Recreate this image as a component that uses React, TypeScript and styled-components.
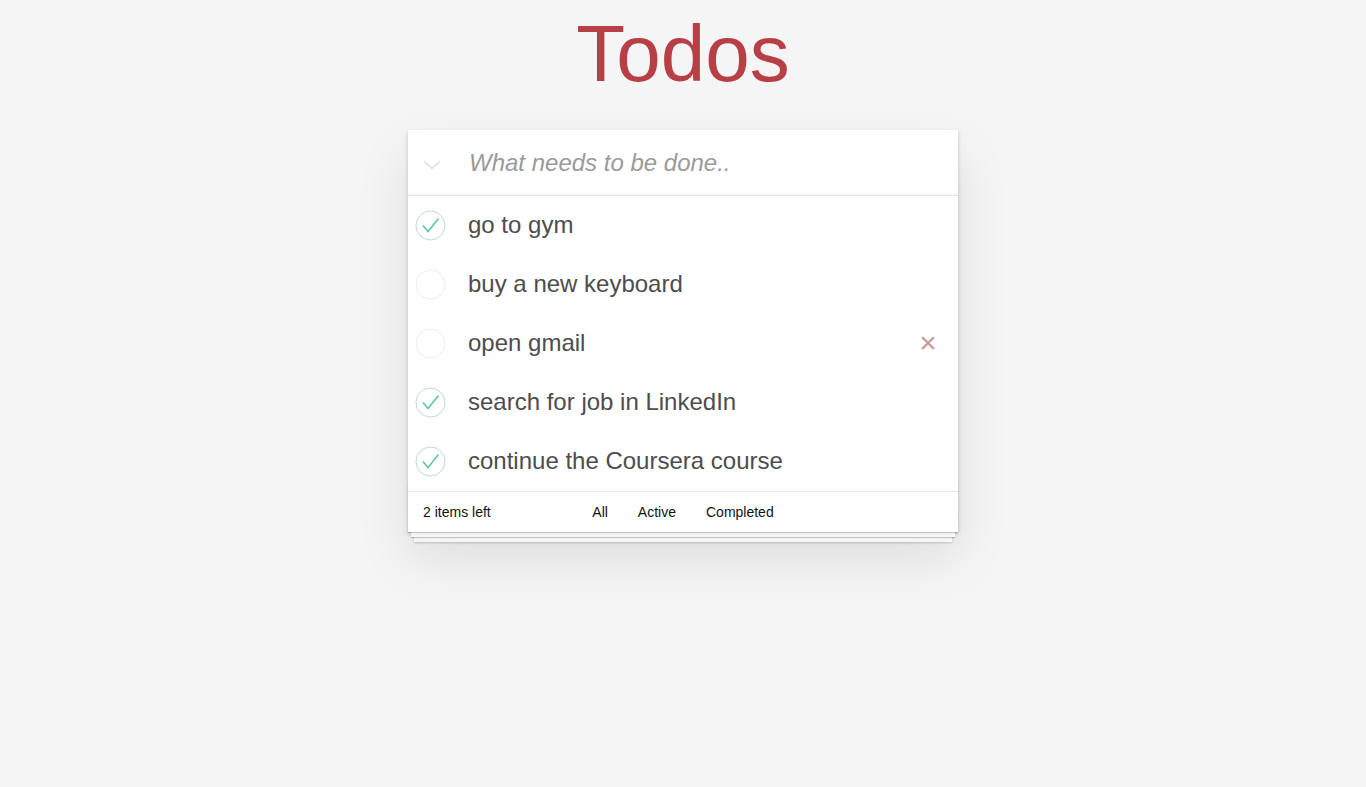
import React, { useState } from 'react';
import styled, { createGlobalStyle } from 'styled-components';

const GlobalStyle = createGlobalStyle`
  body {
    margin: 0;
    background: #f5f5f5;
    font-family: "Liberation Sans", Arial, sans-serif;
    color: #4d4d4d;
  }
`;

const Page = styled.div`
  display: flex;
  flex-direction: column;
  align-items: center;
  min-height: 787px;
`;

const Title = styled.h1`
  margin: 0;
  padding-top: 8px;
  font-size: 80px;
  line-height: 92px;
  font-weight: 200;
  color: #b83f45;
  text-align: center;
`;

const Card = styled.section`
  width: 550px;
  margin-top: 30px;
  background: #fff;
  position: relative;
  box-shadow: 0 2px 4px 0 rgba(0, 0, 0, 0.2), 0 25px 50px 0 rgba(0, 0, 0, 0.1);
`;

const Header = styled.header`
  display: flex;
  align-items: center;
  height: 65px;
  box-shadow: inset 0 -2px 1px rgba(0, 0, 0, 0.03);
`;

const ToggleAll = styled.div`
  width: 60px;
  display: flex;
  justify-content: center;
  padding: 4px 12px 0 0;
  box-sizing: border-box;
`;

const NewTodo = styled.input`
  flex: 1;
  border: none;
  outline: none;
  background: transparent;
  font-family: inherit;
  font-size: 24px;
  color: #4d4d4d;
  padding: 0 16px 0 1px;
  &::placeholder {
    font-style: italic;
    color: #9a9a9a;
  }
`;

const List = styled.ul`
  list-style: none;
  margin: 0;
  padding: 0;
  border-top: 1px solid #e6e6e6;
`;

const Item = styled.li`
  position: relative;
  display: flex;
  align-items: center;
  height: 59px;
`;

const Check = styled.button`
  width: 60px;
  height: 59px;
  border: none;
  background: none;
  padding: 0 0 0 7px;
  display: flex;
  align-items: center;
  cursor: pointer;
`;

const Label = styled.label`
  font-size: 24px;
  line-height: 1.2;
  color: #4d4d4d;
`;

const Destroy = styled.button`
  position: absolute;
  right: 10px;
  top: 9px;
  width: 40px;
  height: 40px;
  border: none;
  background: none;
  padding: 0;
  font-family: "Liberation Sans", Arial, sans-serif;
  font-size: 30px;
  line-height: 40px;
  color: #cc9a9a;
  cursor: pointer;
`;

const Footer = styled.footer`
  position: relative;
  display: grid;
  grid-template-columns: 1fr auto 1fr;
  align-items: center;
  height: 40px;
  padding: 0 15px;
  border-top: 1px solid #e6e6e6;
  font-size: 14px;
  color: #111;
  &::before {
    content: '';
    position: absolute;
    left: 0;
    right: 0;
    bottom: 0;
    height: 50px;
    overflow: hidden;
    pointer-events: none;
    box-shadow: 0 1px 1px rgba(0, 0, 0, 0.2), 0 8px 0 -3px #f6f6f6,
      0 9px 1px -3px rgba(0, 0, 0, 0.2), 0 16px 0 -6px #f6f6f6,
      0 17px 2px -6px rgba(0, 0, 0, 0.2);
  }
`;

const Count = styled.span`
  position: relative;
`;

const Filters = styled.ul`
  list-style: none;
  margin: 0;
  padding: 0;
  display: flex;
  gap: 14px;
  position: relative;
`;

const FilterLink = styled.a<{ $selected?: boolean }>`
  display: block;
  padding: 3px 7px;
  color: inherit;
  text-decoration: none;
  border: 1px solid transparent;
  border-radius: 3px;
  cursor: pointer;
`;

const CircleCheck = ({ done }: { done: boolean }) => (
  <svg width="31" height="31" viewBox="0 0 31 31">
    <circle cx="15.5" cy="15.5" r="14.5" fill="none" stroke={done ? '#bddad5' : '#ededed'} strokeWidth="1" />
    {done && <path d="M8 15.5 L13 21.5 L23.5 8.5" fill="none" stroke="#5dc2af" strokeWidth="1.6" />}
  </svg>
);

const todos = [
  { text: 'go to gym', done: true },
  { text: 'buy a new keyboard', done: false },
  { text: 'open gmail', done: false },
  { text: 'search for job in LinkedIn', done: true },
  { text: 'continue the Coursera course', done: true },
];

export default function App() {
  const [items, setItems] = useState(todos);
  const left = items.filter((t) => !t.done).length;

  const toggle = (i: number) =>
    setItems(items.map((t, j) => (j === i ? { ...t, done: !t.done } : t)));

  return (
    <Page>
      <GlobalStyle />
      <Title>Todos</Title>
      <Card>
        <Header>
          <ToggleAll>
            <svg width="18" height="10" viewBox="0 0 18 10">
              <path d="M1 1 L9 8.5 L17 1" fill="none" stroke="#e6e6e6" strokeWidth="2" />
            </svg>
          </ToggleAll>
          <NewTodo placeholder="What needs to be done.." />
        </Header>
        <List>
          {items.map((t, i) => (
            <Item key={t.text}>
              <Check onClick={() => toggle(i)}>
                <CircleCheck done={t.done} />
              </Check>
              <Label>{t.text}</Label>
              {i === 2 && <Destroy>×</Destroy>}
            </Item>
          ))}
        </List>
        <Footer>
          <Count>{left} items left</Count>
          <Filters>
            <li><FilterLink $selected>All</FilterLink></li>
            <li><FilterLink>Active</FilterLink></li>
            <li><FilterLink>Completed</FilterLink></li>
          </Filters>
          <span />
        </Footer>
      </Card>
    </Page>
  );
}
